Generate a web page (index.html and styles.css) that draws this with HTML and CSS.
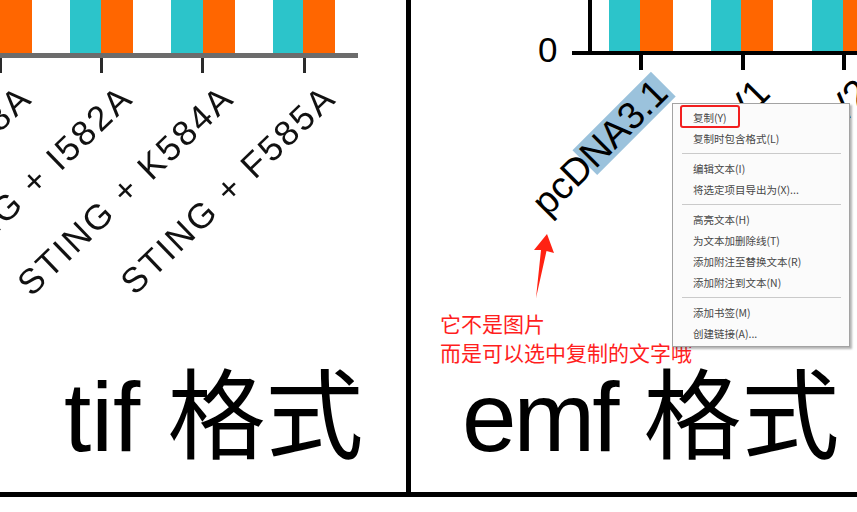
FILE: index.html
```html
<!DOCTYPE html>
<html lang="zh-CN">
<head>
<meta charset="utf-8">
<title>tif vs emf</title>
<link rel="stylesheet" href="styles.css">
</head>
<body>
<div class="page">
  <div class="panels">
    <section class="panel panel-left">
      <svg class="chart chart-tif" width="406" height="370" viewBox="0 0 406 370">
        <rect class="bar-o" x="0" y="0" width="32" height="54"/>
        <rect class="bar-c" x="70" y="0" width="31" height="54"/>
        <rect class="bar-o" x="101" y="0" width="32" height="54"/>
        <rect class="bar-c" x="171" y="0" width="32" height="54"/>
        <rect class="bar-o" x="203" y="0" width="32" height="54"/>
        <rect class="bar-c" x="273" y="0" width="30" height="54"/>
        <rect class="bar-o" x="303" y="0" width="32" height="54"/>
        <rect class="axis-gray" x="0" y="53" width="358" height="5"/>
        <rect class="tick-l" x="-1" y="58" width="3" height="15"/>
        <rect class="tick-l" x="100" y="58" width="3" height="15"/>
        <rect class="tick-l" x="201" y="58" width="3" height="15"/>
        <rect class="tick-l" x="303" y="58" width="3" height="15"/>
        <text class="lbl-l" text-anchor="end" transform="translate(34 100) rotate(-44)">STING + L578A</text>
        <text class="lbl-l" text-anchor="end" transform="translate(135 100) rotate(-44)">STING + I582A</text>
        <text class="lbl-l" text-anchor="end" transform="translate(236 100) rotate(-44)">STING + K584A</text>
        <text class="lbl-l" text-anchor="end" transform="translate(338 100) rotate(-44)">STING + F585A</text>
      </svg>
      <div class="caption caption-left">tif 格式</div>
    </section>
    <div class="divider"></div>
    <section class="panel panel-right">
      <svg class="chart chart-emf" width="446" height="370" viewBox="411 0 446 370">
        <rect class="bar-c" x="609" y="0" width="31" height="52"/>
        <rect class="bar-o" x="640" y="0" width="33" height="52"/>
        <rect class="bar-c" x="711" y="0" width="30" height="52"/>
        <rect class="bar-o" x="741" y="0" width="32" height="52"/>
        <rect class="bar-c" x="812" y="0" width="31" height="52"/>
        <rect class="bar-o" x="843" y="0" width="32" height="52"/>
        <rect class="axis-black" x="588" y="0" width="4" height="54"/>
        <rect class="axis-black" x="572" y="51" width="290" height="4"/>
        <rect class="axis-black" x="639" y="54" width="4" height="16"/>
        <rect class="axis-black" x="741" y="54" width="4" height="16"/>
        <rect class="axis-black" x="842" y="54" width="4" height="16"/>
        <text class="num" x="538" y="62">0</text>
        <g transform="translate(670 95) rotate(-45)">
          <rect class="sel" x="-108" y="-30" width="111" height="35"/>
          <text class="lbl-r" text-anchor="end">pcDNA3.1</text>
        </g>
        <text class="lbl-r" text-anchor="end" transform="translate(772 95) rotate(-45)">V1</text>
        <text class="lbl-r" text-anchor="end" transform="translate(873 95) rotate(-45)">V2</text>
      </svg>
      <div class="caption caption-right"><span class="latin-tight">emf</span> 格式</div>
    </section>
  </div>
  <div class="rule"></div>

  <svg class="arrow" width="30" height="70" viewBox="530 232 30 70">
    <polygon class="arrow-shape" points="547,234 554,253 546.5,251 536,298 541,250 534,250"/>
  </svg>

  <div class="note">
    <div>它不是图片</div>
    <div>而是可以选中复制的文字哦</div>
  </div>

  <div class="menu">
    <div class="menu-item">复制(Y)</div>
    <div class="menu-item">复制时包含格式(L)</div>
    <div class="menu-sep"></div>
    <div class="menu-item">编辑文本(I)</div>
    <div class="menu-item">将选定项目导出为(X)...</div>
    <div class="menu-sep"></div>
    <div class="menu-item">高亮文本(H)</div>
    <div class="menu-item">为文本加删除线(T)</div>
    <div class="menu-item">添加附注至替换文本(R)</div>
    <div class="menu-item">添加附注到文本(N)</div>
    <div class="menu-sep"></div>
    <div class="menu-item">添加书签(M)</div>
    <div class="menu-item">创建链接(A)...</div>
    <div class="menu-mark"></div>
  </div>
</div>
</body>
</html>
```

FILE: styles.css
```css
html, body {
  margin: 0;
  padding: 0;
  background: #ffffff;
}
body {
  width: 857px;
  height: 512px;
  overflow: hidden;
  font-family: "Liberation Sans", "Noto Sans CJK SC", sans-serif;
}
.page {
  position: relative;
  width: 857px;
  height: 512px;
}
.panels {
  display: flex;
  height: 492px;
}
.panel {
  display: flex;
  flex-direction: column;
  overflow: hidden;
}
.panel-left {
  width: 406px;
}
.panel-right {
  flex: 1;
}
.divider {
  width: 5px;
  background: #000;
}
.rule {
  height: 5px;
  background: #000;
}
.chart {
  display: block;
  flex: none;
}
.chart-tif {
  filter: blur(0.6px);
}
.bar-o { fill: #ff6600; }
.bar-c { fill: #2cc4ca; }
.axis-gray { fill: #6c6c6c; }
.tick-l { fill: #2a2a2a; }
.axis-black { fill: #000; }
.lbl-l {
  font-family: "Liberation Sans", sans-serif;
  font-size: 35px;
  letter-spacing: 2.5px;
  fill: #111;
}
.lbl-r {
  font-family: "Liberation Sans", sans-serif;
  font-size: 38px;
  fill: #000;
}
.num {
  font-family: "Liberation Sans", sans-serif;
  font-size: 35px;
  fill: #000;
}
.sel { fill: #9bc2dc; }

.caption {
  flex: 1;
  font-family: "Liberation Sans", "Noto Sans CJK SC", sans-serif;
  font-size: 98px;
  line-height: 94px;
  color: #000;
  white-space: nowrap;
}
.caption-left {
  padding-left: 64px;
}
.caption-right {
  padding-left: 51px;
}
.latin-tight {
  letter-spacing: -3px;
}

.arrow {
  position: absolute;
  left: 530px;
  top: 232px;
}
.arrow-shape { fill: #ff2213; }

.note {
  position: absolute;
  left: 440px;
  top: 309px;
  font-family: "Noto Sans CJK SC", sans-serif;
  font-size: 21px;
  line-height: 29px;
  color: #ff1e1e;
  white-space: nowrap;
}

.menu {
  position: absolute;
  left: 672px;
  top: 103px;
  width: 176px;
  padding: 3px 0 2px;
  background: #fbfbfb;
  border: 1px solid #a3a3a3;
  box-shadow: 2px 2px 2px rgba(0, 0, 0, 0.3);
  font-family: "Noto Sans CJK SC", sans-serif;
  font-size: 10.5px;
  color: #474747;
}
.menu-item {
  height: 21px;
  line-height: 21px;
  padding-left: 20px;
  white-space: nowrap;
}
.menu-sep {
  height: 1px;
  margin: 4px 8px 4px 9px;
  background: #cacaca;
}
.menu-mark {
  position: absolute;
  left: 7px;
  top: 1px;
  width: 56px;
  height: 19px;
  border: 2px solid #f21f1f;
  border-radius: 3px;
}
```
